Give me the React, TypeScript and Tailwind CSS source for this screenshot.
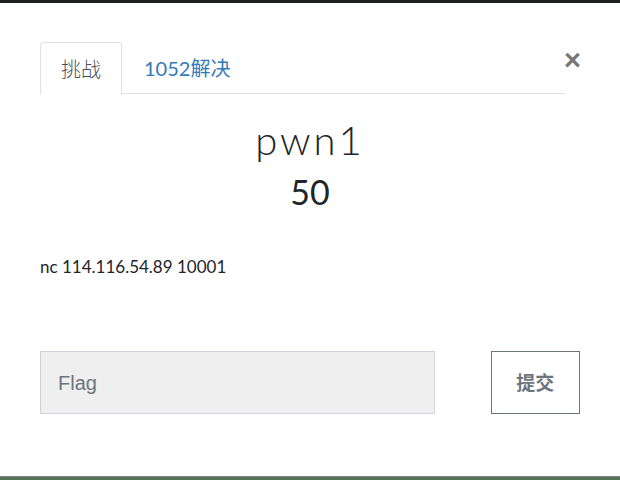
import React from "react";

export default function App() {
  return (
    <div className="w-[620px] h-[480px] flex flex-col bg-white overflow-hidden" style={{ fontFamily: "Lato, 'Noto Sans CJK SC', sans-serif" }}>
      <div className="h-[3px] bg-[#1e2124] shrink-0" />
      <div className="flex-1 flex flex-col px-[40px] relative">
        <button className="absolute left-[564px] top-[43px] text-[#777] text-[29px] leading-none font-bold" style={{ fontFamily: "'Liberation Sans', sans-serif" }}>×</button>
        <div className="mt-[39px] w-[525px] flex border-b border-[#dee2e6] h-[52px]">
          <div className="w-[82px] h-[53px] border border-[#dee2e6] border-b-white rounded-t-[4px] bg-white flex items-center justify-center text-[20px] font-light text-[#495057]" style={{ fontFamily: "'Noto Sans CJK SC', sans-serif" }}>挑战</div>
          <div className="pl-[22px] flex items-center text-[20px] text-[#337ab7]" style={{ fontFamily: "Lato, 'Noto Sans CJK SC', sans-serif" }}>1052解决</div>
        </div>
        <div className="mt-[22px] text-center text-[40px] font-light leading-[48px] tracking-[3px] text-[#212529]">pwn1</div>
        <div className="mt-[8px] text-center text-[34px] leading-[40px] text-[#212529]">50</div>
        <div className="mt-[45px] text-[17px] leading-[20px] text-[#212529]">nc 114.116.54.89 10001</div>
        <div className="mt-[74px] flex items-start">
          <div className="w-[398px] h-[63px] bg-[#efefef] border border-[#ced4da] flex items-center pl-[17px] text-[20px] text-[#6c757d]" style={{ fontFamily: "'Liberation Sans', Arial, sans-serif" }}>Flag</div>
          <div className="ml-[56px] w-[90px] h-[63px] border border-[#6c757d] flex items-center justify-center text-[19px] font-bold text-[#6c757d]" style={{ fontFamily: "'Noto Sans CJK SC', sans-serif" }}>提交</div>
        </div>
      </div>
      <div className="h-[4px] shrink-0 flex flex-col">
        <div className="h-[1px] bg-[#7d857d]" />
        <div className="flex-1 bg-[#557555]" />
      </div>
    </div>
  );
}
